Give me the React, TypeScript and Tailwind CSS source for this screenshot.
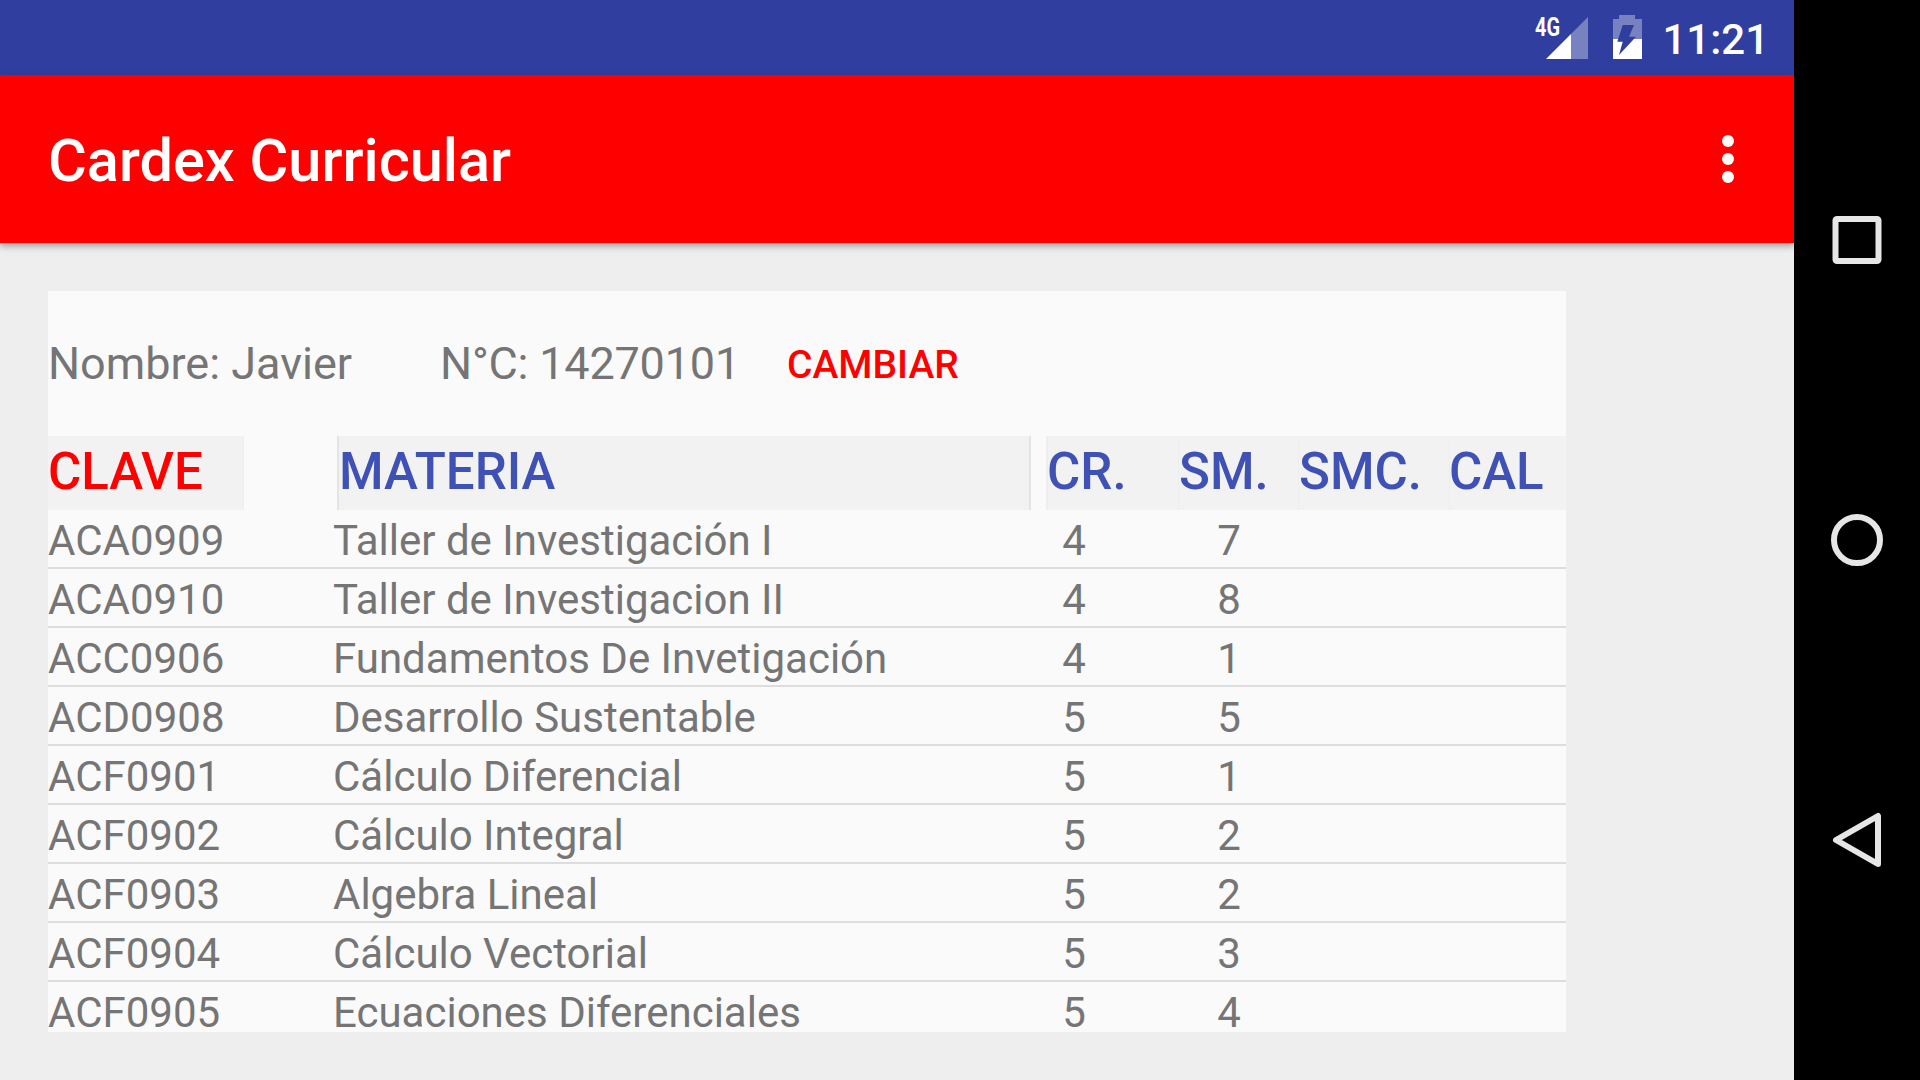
const rows = [
  ["ACA0909", "Taller de Investigación I", "4", "7"],
  ["ACA0910", "Taller de Investigacion II", "4", "8"],
  ["ACC0906", "Fundamentos De Invetigación", "4", "1"],
  ["ACD0908", "Desarrollo Sustentable", "5", "5"],
  ["ACF0901", "Cálculo Diferencial", "5", "1"],
  ["ACF0902", "Cálculo Integral", "5", "2"],
  ["ACF0903", "Algebra Lineal", "5", "2"],
  ["ACF0904", "Cálculo Vectorial", "5", "3"],
  ["ACF0905", "Ecuaciones Diferenciales", "5", "4"],
];

function StatusIcons() {
  return (
    <svg width="120" height="75" viewBox="1530 0 120 75" className="block">
      <text x="1535" y="36" fontSize="26" fontWeight="700" fill="#fff" fontFamily="Roboto, sans-serif" textLength="25" lengthAdjust="spacingAndGlyphs">4G</text>
      <polygon points="1571,34 1588,17 1588,59 1571,59" fill="#fff" fillOpacity="0.35" />
      <polygon points="1546,59 1571,59 1571,34" fill="#fff" />
      <path d="M1619 15h16v4h7v20h-29v-20h6z" fill="#fff" fillOpacity="0.35" />
      <rect x="1613" y="39" width="29" height="20" fill="#fff" />
      <polygon points="1622.7,25 1634,25 1629,36.7 1636,36.7 1619,55 1622.7,41.7 1617.3,41.7" fill="#303f9f" />
    </svg>
  );
}

function NavIcon({ kind }: { kind: "square" | "circle" | "triangle" }) {
  return (
    <svg width="60" height="60" viewBox="0 0 60 60" fill="none" stroke="#e6e6e6" strokeWidth="6" strokeLinejoin="round" className="block">
      {kind === "square" && <rect x="8.5" y="9" width="43" height="42" rx="1.5" />}
      {kind === "circle" && <circle cx="30" cy="30" r="23" />}
      {kind === "triangle" && <polygon points="9,30 51,6 51,54" />}
    </svg>
  );
}

export default function App() {
  return (
    <div className="flex w-[1920px] h-[1080px] overflow-hidden bg-black font-['Roboto',sans-serif]">
      <div className="flex flex-col w-[1794px] bg-[#eeeeee]">
        <div className="h-[75px] bg-[#303f9f] flex items-center justify-end pr-[25px] shrink-0">
          <StatusIcons />
          <span className="ml-[12px] pt-[5px] text-[42px] font-medium text-white leading-none">11:21</span>
        </div>
        <div className="relative z-10 h-[168px] shrink-0 bg-[#ff0000] shadow-[0_3px_7px_rgba(0,0,0,0.35)] flex items-center justify-between pl-[48px] pr-[60px]">
          <span className="pt-[6px] text-[59.5px] font-medium text-white leading-none">Cardex Curricular</span>
          <div className="flex flex-col gap-[6px]">
            <span className="w-[12px] h-[12px] rounded-full bg-white" />
            <span className="w-[12px] h-[12px] rounded-full bg-white" />
            <span className="w-[12px] h-[12px] rounded-full bg-white" />
          </div>
        </div>
        <div className="pl-[48px] pt-[48px]">
          <div className="w-[1518px] h-[741px] bg-[#fafafa] text-[#757575]">
            <div className="h-[145px] flex items-center">
              <span className="w-[392px] text-[45px] leading-none">Nombre: Javier</span>
              <span className="w-[347px] text-[45px] leading-none tracking-[-0.2px]">N°C: 14270101</span>
              <span className="pt-[4px] text-[39px] font-medium text-[#ff0000] leading-none">CAMBIAR</span>
            </div>
            <div className="h-[74px] flex items-center text-[51px] font-medium leading-none text-[#3f51b5]">
              <div className="w-[196px] h-full flex items-center bg-[#f2f2f2] border-r border-[#eeeeee] text-[#ff0000]"><span className="mb-[3px]">CLAVE</span></div>
              <div className="w-[93px] h-full" />
              <div className="w-[694px] h-full flex items-center bg-[#f2f2f2] border-l-2 border-r-2 border-[#e4e4e4]"><span className="mb-[3px]">MATERIA</span></div>
              <div className="w-[15px] h-full" />
              <div className="w-[132px] h-full flex items-center bg-[#f2f2f2] border-l-2 border-[#eeeeee]"><span className="-ml-[1px] mb-[3px]">CR.</span></div>
              <div className="w-[120px] h-full flex items-center bg-[#f2f2f2] border-l border-[#eeeeee]"><span className="mb-[3px]">SM.</span></div>
              <div className="w-[151px] h-full flex items-center bg-[#f2f2f2] border-l border-[#eeeeee]"><span className="mb-[3px]">SMC.</span></div>
              <div className="w-[117px] h-full flex items-center bg-[#f2f2f2] border-l border-[#eeeeee]"><span className="-ml-[1px] mb-[3px]">CAL</span></div>
            </div>
            {rows.map((r) => (
              <div key={r[0]} className="h-[59px] last:h-[50px] pt-[13px] grid grid-cols-[285px_713px_56px_76px_102px_1fr] items-start border-b-2 last:border-b-0 border-[#dddddd] text-[42px] leading-[36px]">
                <span>{r[0]}</span>
                <span>{r[1]}</span>
                <span className="text-center">{r[2]}</span>
                <span />
                <span className="text-center">{r[3]}</span>
                <span />
              </div>
            ))}
          </div>
        </div>
      </div>
      <div className="flex-1 flex flex-col items-center pt-[210px] gap-[240px] bg-black">
        <NavIcon kind="square" />
        <NavIcon kind="circle" />
        <NavIcon kind="triangle" />
      </div>
    </div>
  );
}
